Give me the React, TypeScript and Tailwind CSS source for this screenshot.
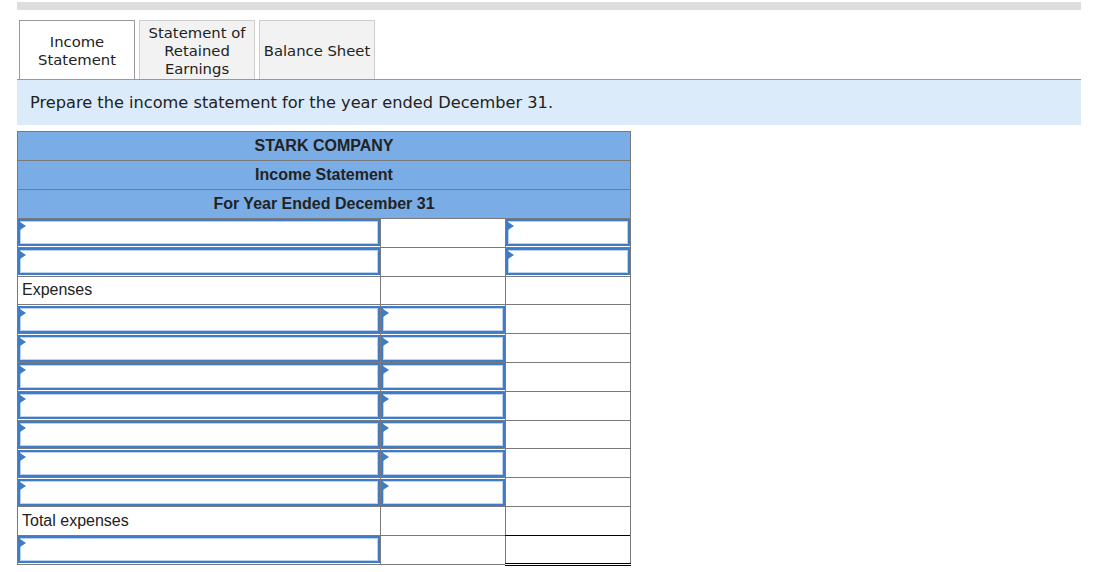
const arial = { fontFamily: '"Liberation Sans", Arial, sans-serif' }

function Entry() {
  return (
    <div className="relative block h-[27px] w-full border-2 border-[#3f7bc6] bg-white shadow-[inset_0_0_0_1px_#b9d2ef]">
      <span className="absolute left-0 top-[1px] h-0 w-0 border-y-[4px] border-l-[6px] border-y-transparent border-l-[#3f7bc6]" />
    </div>
  )
}

type Row = {
  label?: string
  a?: boolean
  b?: boolean
  c?: boolean
  last?: boolean
  total?: boolean
}

const rows: Row[] = [
  { a: true, c: true },
  { a: true, c: true },
  { label: 'Expenses' },
  { a: true, b: true },
  { a: true, b: true },
  { a: true, b: true },
  { a: true, b: true },
  { a: true, b: true },
  { a: true, b: true },
  { a: true, b: true },
  { label: 'Total expenses', total: true },
  { a: true, last: true },
]

function Tab({ children, active }: { children: React.ReactNode; active?: boolean }) {
  return (
    <div
      className={`flex h-[59px] w-[116px] items-center justify-center border border-b-0 pt-[1px] text-center text-[14.8px] leading-[18px] text-[#222] ${
        active ? 'border-[#999] bg-white' : 'border-[#ccc] bg-[#f2f2f2]'
      }`}
    >
      {children}
    </div>
  )
}

export default function App() {
  return (
    <div className="min-h-[572px] bg-white pt-[2px]" style={{ fontFamily: '"DejaVu Sans", Verdana, sans-serif' }}>
      <div className="ml-[17px] w-[1064px]">
        <div className="h-[8px] bg-[#dddddd]" />

        <div className="mt-[10px] flex gap-[4px] pl-[2px]">
          <Tab active>
            Income
            <br />
            Statement
          </Tab>
          <Tab>
            Statement of
            <br />
            Retained
            <br />
            Earnings
          </Tab>
          <Tab>Balance Sheet</Tab>
        </div>

        <div className="border-t border-[#999] bg-[#dbebf9] pb-[12px] pl-[13px] pt-[13px] text-[16.2px] leading-[20px] text-[#222]">
          Prepare the income statement for the year ended December 31.
        </div>

        <table className="mt-[6px] w-[613px] table-fixed border-collapse border border-[#6f6f6f]" style={arial}>
          <colgroup>
            <col className="w-[363px]" />
            <col className="w-[125px]" />
            <col className="w-[125px]" />
          </colgroup>
          <thead>
            {['STARK COMPANY', 'Income Statement', 'For Year Ended December 31'].map(t => (
              <tr key={t} className="h-[29px]">
                <th colSpan={3} className="border border-[#7a7a7a] bg-[#7aade5] p-0 text-center text-[16px] font-bold text-[#222]">
                  {t}
                </th>
              </tr>
            ))}
          </thead>
          <tbody>
            {rows.map((r, i) => (
              <tr key={i} className="h-[28.8px]">
                <td className="border border-[#7a7a7a] p-0 text-[16px] text-[#222]">
                  {r.a ? <Entry /> : <span className="pl-[4px]">{r.label}</span>}
                </td>
                <td className="border border-[#7a7a7a] p-0">{r.b ? <Entry /> : null}</td>
                <td
                  className={`border p-0 ${
                    r.total
                      ? 'border-[#7a7a7a] border-b-black'
                      : r.last
                        ? 'border-[#7a7a7a] border-t-black border-b-[3px] border-b-black border-double'
                        : 'border-[#7a7a7a]'
                  }`}
                >
                  {r.c ? <Entry /> : null}
                </td>
              </tr>
            ))}
          </tbody>
        </table>
      </div>
    </div>
  )
}
